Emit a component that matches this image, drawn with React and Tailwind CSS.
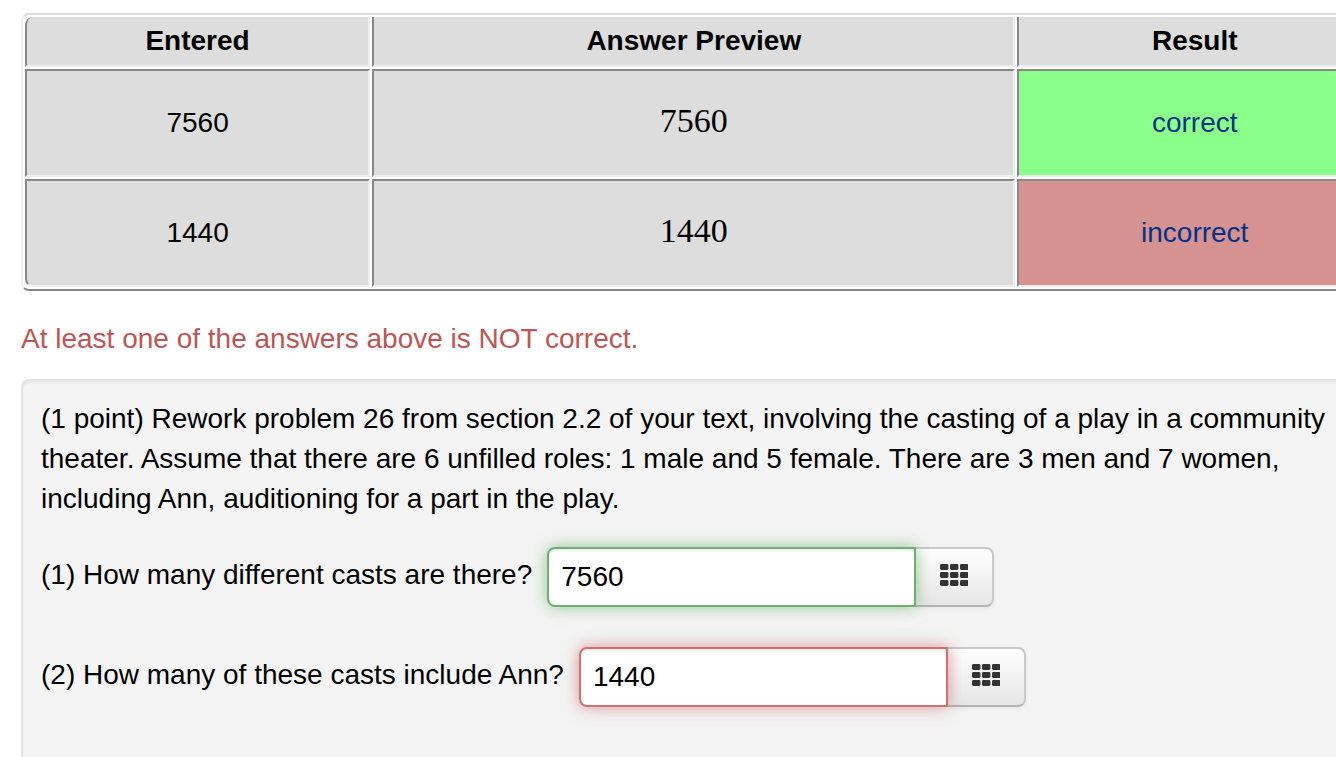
import React from "react";

const results = [
  { entered: "7560", correct: true },
  { entered: "1440", correct: false },
];

const lightEdges = "border-r-2 border-b-2 border-r-[#eee] border-b-[#eee]";
const darkLeft = "border-l-2 border-l-[#888]";

function KeypadIcon() {
  return (
    <svg width="28" height="22" viewBox="0 0 28 22" fill="#333" aria-hidden="true" className="mb-1">
      {[0, 8, 16].map((y) =>
        [0, 10, 20].map((x) => <rect key={`${x}-${y}`} x={x} y={y} width="8.4" height="6" rx="1.4" />)
      )}
    </svg>
  );
}

function ResultsTable() {
  return (
    <table className="w-full table-fixed border-separate border-spacing-[2px] rounded-lg border-2 border-t-[#ddd] border-r-[#888] border-b-[#888] border-l-[#eee] text-center">
      <colgroup>
        <col className="w-[25.7%]" />
        <col className="w-[47.9%]" />
        <col />
      </colgroup>
      <thead>
        <tr className="h-[50px]">
          <th scope="col" className={`${darkLeft} ${lightEdges} rounded-tl-lg bg-[#ddd] p-0 font-bold`}>Entered</th>
          <th scope="col" className={`${darkLeft} ${lightEdges} bg-[#ddd] p-0 font-bold`}>Answer Preview</th>
          <th scope="col" className={`${darkLeft} ${lightEdges} rounded-tr-lg bg-[#ddd] p-0 font-bold`}>Result</th>
        </tr>
      </thead>
      <tbody>
        {results.map((r, i) => (
          <tr key={r.entered} className="h-[108px]">
            <td className={`${darkLeft} ${lightEdges} border-t-2 border-t-[#888] bg-[#ddd] p-0 ${i === 1 ? "rounded-bl-lg" : ""}`}>
              {r.entered}
            </td>
            <td className={`${darkLeft} ${lightEdges} border-t-2 border-t-[#888] bg-[#ddd] p-0 pb-1 font-['Liberation_Serif',serif] text-[34px]`}>
              {r.entered}
            </td>
            <td className={`${darkLeft} ${lightEdges} border-t-2 border-t-[#888] p-0 ${r.correct ? "bg-[#8aff8a]" : "bg-[#d69191]"}`}>
              <a href="#answers" className="text-[#003388]">{r.correct ? "correct" : "incorrect"}</a>
            </td>
          </tr>
        ))}
      </tbody>
    </table>
  );
}

function AnswerRow({ id, label, value, correct }) {
  return (
    <div className="flex items-center">
      <label htmlFor={id} className="mr-[15px] pb-1">{label}</label>
      <input
        id={id}
        type="text"
        defaultValue={value}
        className={`relative h-[60px] w-[369px] rounded-l-lg border-2 bg-white px-3 outline-none ${
          correct
            ? "border-[#70af70] shadow-[inset_0_2px_2px_rgba(0,0,0,0.075),0_0_16px_rgba(81,163,81,0.6)]"
            : "border-[#d07070] shadow-[inset_0_2px_2px_rgba(0,0,0,0.075),0_0_16px_rgba(191,84,84,0.6)]"
        }`}
      />
      <button
        type="button"
        aria-label="Open math keypad"
        className="flex h-[60px] items-center rounded-r-lg border-2 border-l-0 border-[#c8c8c8] border-b-[#b3b3b3] bg-linear-to-b from-white to-[#e6e6e6] px-6 shadow-[0_2px_4px_rgba(0,0,0,0.05)]"
      >
        <KeypadIcon />
      </button>
    </div>
  );
}

export default function App() {
  return (
    <div className="min-h-screen overflow-hidden bg-white font-['Liberation_Sans',Arial,sans-serif] text-[28px] leading-10 text-black">
      <main className="-mr-10 flex min-h-screen flex-col pt-[13px] pl-[21px]">
        <ResultsTable />
        <p className="mt-7 mb-5 text-[#bf5454]">At least one of the answers above is NOT correct.</p>
        <section className="grow rounded-t-lg border-2 border-b-0 border-[#e3e3e3] bg-[#f4f4f4] p-[18px] shadow-[inset_0_2px_2px_rgba(0,0,0,0.05)]">
          <p>
            (1 point) Rework problem 26 from section 2.2 of your text, involving the casting of a play in a community
            theater. Assume that there are 6 unfilled roles: 1 male and 5 female. There are 3 men and 7 women,
            including Ann, auditioning for a part in the play.
          </p>
          <div className="mt-7 flex flex-col gap-10 pb-8">
            <AnswerRow id="casts" label="(1) How many different casts are there?" value="7560" correct />
            <AnswerRow id="ann" label="(2) How many of these casts include Ann?" value="1440" correct={false} />
          </div>
        </section>
      </main>
    </div>
  );
}
